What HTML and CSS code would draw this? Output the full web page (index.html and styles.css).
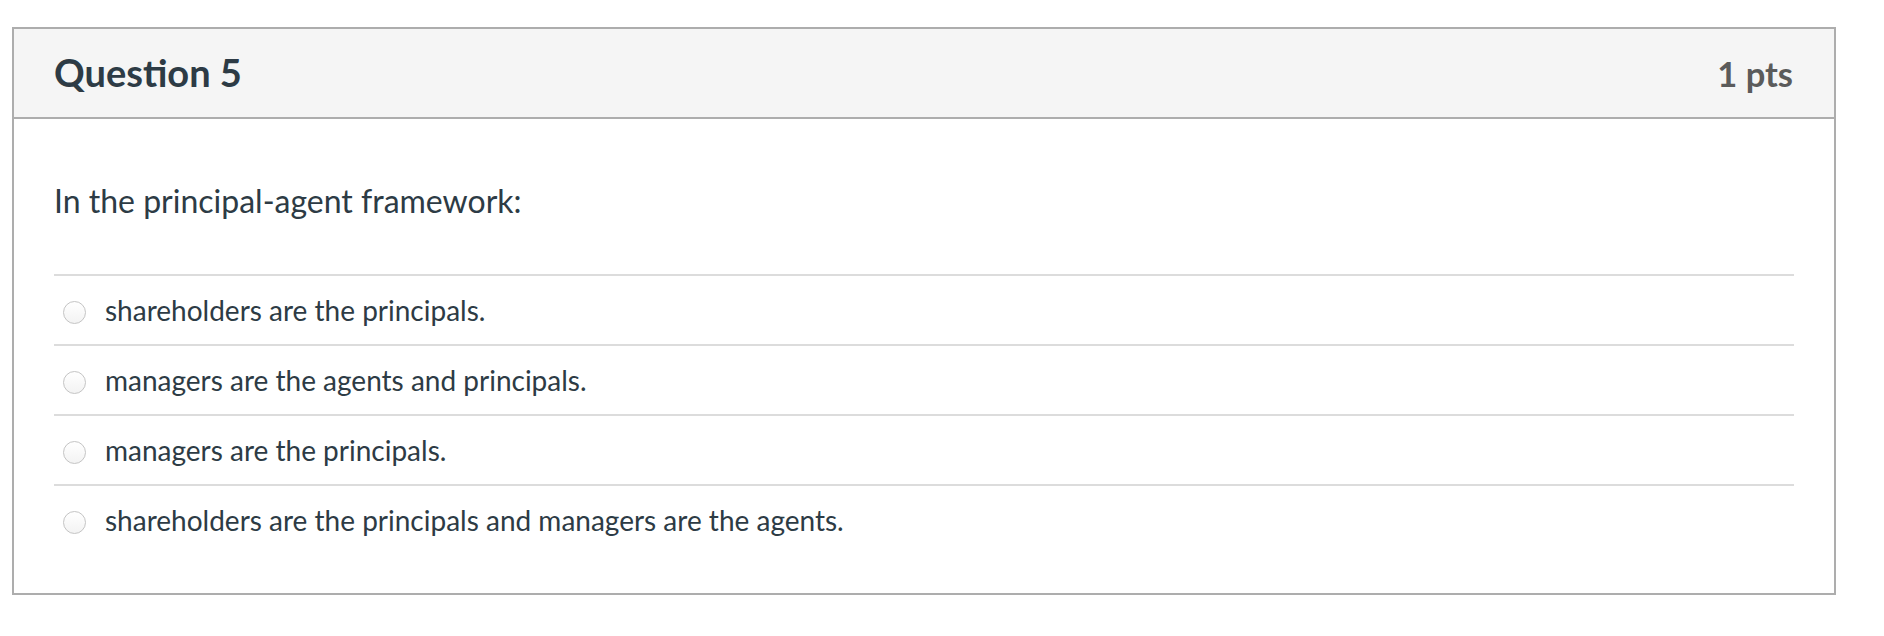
FILE: index.html
```html
<!DOCTYPE html>
<html lang="en">
<head>
<meta charset="utf-8">
<title>Question 5</title>
<link rel="stylesheet" href="styles.css">
</head>
<body>
<div class="quiz-card">
  <div class="quiz-header">
    <h2 class="quiz-title">Question 5</h2>
    <div class="quiz-points">1 pts</div>
  </div>
  <div class="quiz-body">
    <p class="quiz-question">In the principal-agent framework:</p>
    <div class="answers">
      <label class="answer"><span class="radio"></span><span class="answer-text">shareholders are the principals.</span></label>
      <label class="answer"><span class="radio"></span><span class="answer-text">managers are the agents and principals.</span></label>
      <label class="answer"><span class="radio"></span><span class="answer-text">managers are the principals.</span></label>
      <label class="answer"><span class="radio"></span><span class="answer-text">shareholders are the principals and managers are the agents.</span></label>
    </div>
  </div>
</div>
</body>
</html>
```

FILE: styles.css
```css
html, body {
  margin: 0;
  padding: 0;
  background: #ffffff;
}

body {
  font-family: Lato, "Liberation Sans", Arial, sans-serif;
  color: #2d3b45;
  padding: 27px 0 0 12px;
}

.quiz-card {
  width: 1824px;
  box-sizing: border-box;
  border: 2px solid #adadad;
  background: #ffffff;
}

.quiz-header {
  display: flex;
  justify-content: space-between;
  align-items: baseline;
  background: #f5f5f5;
  border-bottom: 2px solid #adadad;
  padding: 21px 41px 21px 40px;
}

.quiz-title {
  margin: 0;
  font-size: 38px;
  font-weight: 700;
  line-height: 1.2;
  color: #2d3b45;
}

.quiz-points {
  font-size: 34.5px;
  font-weight: 700;
  line-height: 1.2;
  color: #5b5b5b;
}

.quiz-body {
  padding: 63px 40px 39px 40px;
}

.quiz-question {
  margin: 0 0 54px 0;
  font-size: 32px;
  line-height: 1.2;
  color: #2d3b45;
}

.answers {
  display: flex;
  flex-direction: column;
}

.answer {
  display: flex;
  align-items: center;
  border-top: 2px solid #dcdcdc;
  padding: 18px 0 18px 0;
  font-size: 28px;
  line-height: 32px;
  color: #2d3b45;
}

.radio {
  flex: none;
  width: 23px;
  height: 23px;
  box-sizing: border-box;
  border: 1px solid #c4c4c4;
  border-radius: 50%;
  background: linear-gradient(#ffffff, #f3f3f3);
  margin: 6px 19px 0 9px;
}

.answer-text {
  display: block;
}
```
